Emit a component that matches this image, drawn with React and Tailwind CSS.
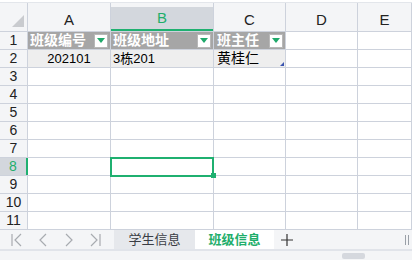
import React from 'react';

const cols = ['A', 'B', 'C', 'D', 'E'];
const widths = ['w-[83px]', 'w-[103px]', 'w-[72px]', 'w-[72px]', 'flex-1'];
const font = "font-['Liberation_Sans','Noto_Sans_CJK_SC',sans-serif]";

const FilterBtn = () => (
  <span className="ml-auto mr-[2px] flex h-[14px] w-[14px] shrink-0 items-center justify-center border border-[#b8b8b8] bg-white">
    <svg width="8" height="5" viewBox="0 0 8 5">
      <path d="M0 0 H8 L4 5 Z" fill="#1fa96b" />
    </svg>
  </span>
);

const Cell = ({ i, children, className = '' }) => (
  <div className={`${widths[i]} flex h-full shrink-0 items-center border-r border-[#cdd2dc] ${className}`}>{children}</div>
);

const App = () => {
  const rows = Array.from({ length: 11 }, (_, i) => i + 1);

  return (
    <div className={`flex h-[260px] w-[412px] flex-col overflow-hidden bg-white ${font}`}>
      {/* top strip */}
      <div className="h-[3px] border-b border-[#e3e6eb] bg-white" />
      <div className="flex h-[29px] border-b border-[#cdd2dc] bg-[#f4f5f7]">
        <div className="relative w-[28px] shrink-0 border-r border-[#cdd2dc]">
          <svg className="absolute bottom-[4px] right-[3px]" width="12" height="12" viewBox="0 0 12 12">
            <path d="M12 0 V12 H0 Z" fill="#c9cbcf" />
          </svg>
        </div>
        {cols.map((c, i) => (
          <div key={c} className={`${widths[i]} flex shrink-0 flex-col border-r border-[#cdd2dc]`}>
            <div className="h-[8px]" />
            <div
              className={`flex flex-1 items-center justify-center text-[15px] ${
                c === 'B' ? 'border-b-2 border-[#1fb070] bg-[#d3d7dd] text-[#1fae6b]' : 'text-[#222]'
              }`}
            >
              {c}
            </div>
          </div>
        ))}
      </div>

      {/* grid rows */}
      {rows.map((r) => (
        <div key={r} className="flex h-[18px] shrink-0 border-b border-[#cdd2dc]">
          <div
            className={`flex w-[28px] shrink-0 items-center justify-center border-r text-[14px] ${
              r === 8 ? 'border-r-2 border-[#1fb070] bg-[#d3d7dd] text-[#1fae6b]' : 'border-[#cdd2dc] bg-[#f4f5f7] text-[#222]'
            }`}
          >
            {r}
          </div>
          {r === 1 && (
            <>
              <Cell i={0} className="bg-[#a6a6a6] pl-[2px] text-[14px] font-bold text-white">
                班级编号<FilterBtn />
              </Cell>
              <Cell i={1} className="bg-[#a6a6a6] pl-[2px] text-[14px] font-bold text-white">
                班级地址<FilterBtn />
              </Cell>
              <Cell i={2} className="bg-[#a6a6a6] pl-[3px] text-[14px] font-bold text-white">
                班主任<FilterBtn />
              </Cell>
              <Cell i={3} />
              <Cell i={4} />
            </>
          )}
          {r === 2 && (
            <>
              <Cell i={0} className="justify-center bg-[#eeeeee] text-[13px] text-black">202101</Cell>
              <Cell i={1} className="bg-[#eeeeee] pl-[2px] text-[13px] text-black">3栋201</Cell>
              <Cell i={2} className="relative bg-[#eeeeee] pl-[3px] text-[14px] text-black">
                黄桂仁
                <svg className="absolute bottom-[1px] right-[1px]" width="4" height="4" viewBox="0 0 4 4">
                  <path d="M4 0 V4 H0 Z" fill="#3b55b0" />
                </svg>
              </Cell>
              <Cell i={3} />
              <Cell i={4} />
            </>
          )}
          {r > 2 && cols.map((c, i) => (
            <Cell key={c} i={i} className={r === 8 && c === 'B' ? 'relative' : ''}>
              {r === 8 && c === 'B' && (
                <>
                  <div className="absolute -left-[1px] -top-[1px] h-[20px] w-[104px] border-2 border-[#1fb070]" />
                  <div className="absolute -bottom-[3px] -right-[3px] h-[5px] w-[5px] bg-[#1fb070]" />
                </>
              )}
            </Cell>
          ))}
        </div>
      ))}

      {/* sheet tabs */}
      <div className="flex h-[21px] shrink-0 items-stretch border-b-2 border-[#e1e4ea] bg-[#f4f5f7]">
        <div className="flex w-[114px] shrink-0 items-center gap-[12px] pl-[10px] text-[#a8abb0]">
          <svg width="14" height="14" viewBox="0 0 14 14" fill="none" stroke="currentColor" strokeWidth="1.2">
            <path d="M2 1 V13 M11 1 L5 7 L11 13" />
          </svg>
          <svg width="14" height="14" viewBox="0 0 14 14" fill="none" stroke="currentColor" strokeWidth="1.2">
            <path d="M10 1 L4 7 L10 13" />
          </svg>
          <svg width="14" height="14" viewBox="0 0 14 14" fill="none" stroke="currentColor" strokeWidth="1.2">
            <path d="M4 1 L10 7 L4 13" />
          </svg>
          <svg width="14" height="14" viewBox="0 0 14 14" fill="none" stroke="currentColor" strokeWidth="1.2">
            <path d="M3 1 L9 7 L3 13 M12 1 V13" />
          </svg>
        </div>
        <div className="flex w-[81px] shrink-0 items-center justify-center bg-[#e6e8ec] text-[13px] text-[#3a3d44]">学生信息</div>
        <div className="flex w-[79px] shrink-0 items-center justify-center bg-white text-[13px] font-bold text-[#1fae6b]">班级信息</div>
        <div className="flex w-[26px] items-center justify-center text-[#333]">
          <svg width="14" height="14" viewBox="0 0 14 14" stroke="currentColor" strokeWidth="1.2">
            <path d="M7 1 V13 M1 7 H13" />
          </svg>
        </div>
        <div className="flex-1" />
        <div className="mr-[3px] flex items-center gap-[2px]">
          <span className="h-[10px] w-[1px] bg-[#9aa0a8]" />
          <span className="h-[10px] w-[1px] bg-[#9aa0a8]" />
        </div>
      </div>
      <div className="flex flex-1 bg-[#f4f5f7]">
        <div className="ml-[342px] mt-[2px] h-[6px] w-[23px] rounded-[2px] bg-[#d5d8de]" />
      </div>
    </div>
  );
};

export default App;
